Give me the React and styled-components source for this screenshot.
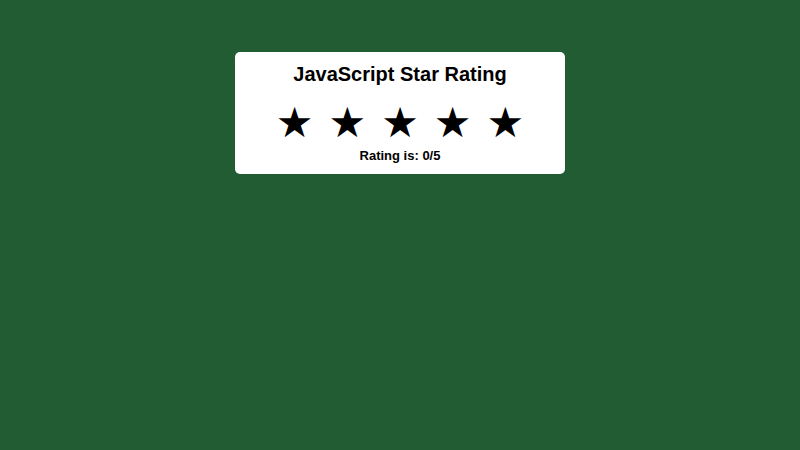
import React, { useState } from "react";
import styled, { createGlobalStyle } from "styled-components";

const GlobalStyle = createGlobalStyle`
  html, body {
    margin: 0;
    padding: 0;
  }
  body {
    background-color: #225c33;
    font-family: "Liberation Sans", Arial, sans-serif;
    height: 100vh;
  }
`;

const Page = styled.div`
  display: flex;
  justify-content: center;
  padding-top: 52px;
`;

const Card = styled.div`
  width: 330px;
  box-sizing: border-box;
  background: #fff;
  border-radius: 5px;
  padding: 10px 0 11px;
  text-align: center;
`;

const Title = styled.h1`
  margin: 0;
  font-size: 20px;
  font-weight: bold;
  color: #000;
  line-height: 24px;
`;

const Stars = styled.div`
  display: flex;
  justify-content: center;
  gap: 15px;
  margin-top: 15px;
`;

const Star = styled.span`
  font-family: "DejaVu Sans", sans-serif;
  font-size: 42px;
  line-height: 44px;
  color: ${(p) => (p.$on ? "#f5b301" : "#000")};
  cursor: pointer;
`;

const Result = styled.p`
  margin: 3px 0 0;
  font-size: 13px;
  font-weight: bold;
  color: #000;
`;

export default function App() {
  const [rating, setRating] = useState(0);
  return (
    <>
      <GlobalStyle />
      <Page>
        <Card>
          <Title>JavaScript Star Rating</Title>
          <Stars>
            {[1, 2, 3, 4, 5].map((n) => (
              <Star key={n} $on={n <= rating} onClick={() => setRating(n)}>
                ★
              </Star>
            ))}
          </Stars>
          <Result>Rating is: {rating}/5</Result>
        </Card>
      </Page>
    </>
  );
}
